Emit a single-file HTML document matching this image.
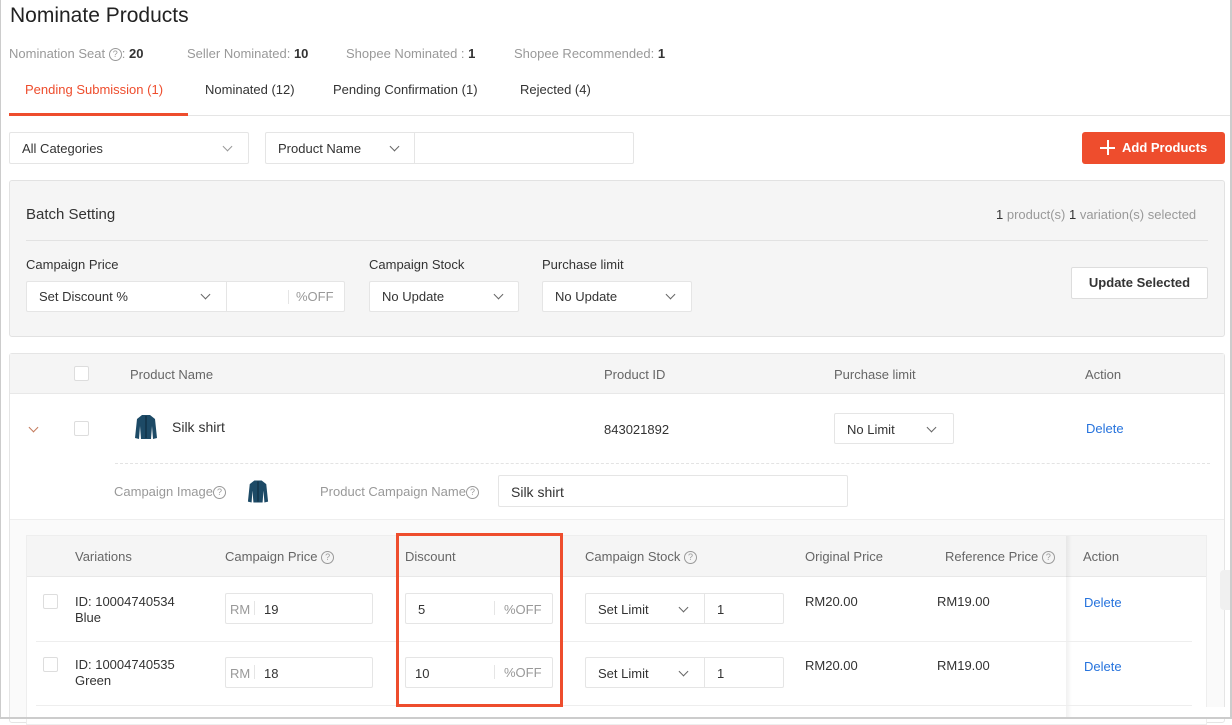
<!DOCTYPE html><html><head><meta charset="utf-8"><style>
*{box-sizing:border-box;margin:0;padding:0}
body{width:1232px;height:719px;overflow:hidden;background:#fff;font-family:"Liberation Sans",sans-serif;font-size:13px;color:#333;position:relative}
.a{position:absolute;white-space:nowrap}
.g{color:#999}
.box{position:absolute;border:1px solid #e5e5e5;border-radius:2px;background:#fff}
.chev{position:absolute;width:7px;height:7px;border-right:1.3px solid #666;border-bottom:1.3px solid #666;transform:rotate(45deg)}
.q{display:inline-block;width:13px;height:13px;border:1px solid #999;border-radius:50%;font-size:9px;line-height:11px;text-align:center;color:#999;vertical-align:1px}
.cb{position:absolute;width:15px;height:15px;border:1px solid #ddd;border-radius:2px;background:#fff}
.del{color:#2673dd}
</style></head><body>
<div class="a" style="left:0;top:0;width:1px;height:719px;background:#ccc"></div>
<div class="a" style="left:1230px;top:0;width:2px;height:719px;background:#ccc"></div>
<div class="a" style="left:10px;top:4px;font-size:21px;color:#222">Nominate Products</div>
<div class="a g" style="left:9px;top:46px">Nomination Seat <span class="q">?</span>: <b style="color:#333">20</b></div>
<div class="a g" style="left:187px;top:46px">Seller Nominated: <b style="color:#333">10</b></div>
<div class="a g" style="left:346px;top:46px">Shopee Nominated : <b style="color:#333">1</b></div>
<div class="a g" style="left:514px;top:46px">Shopee Recommended: <b style="color:#333">1</b></div>
<div class="a" style="left:25px;top:82px;color:#ee4d2d">Pending Submission (1)</div>
<div class="a" style="left:205px;top:82px">Nominated (12)</div>
<div class="a" style="left:333px;top:82px">Pending Confirmation (1)</div>
<div class="a" style="left:520px;top:82px">Rejected (4)</div>
<div class="a" style="left:9px;top:115px;width:1221px;height:1px;background:#e5e5e5"></div>
<div class="a" style="left:9px;top:113px;width:179px;height:3px;background:#ee4d2d"></div>

<div class="box" style="left:9px;top:132px;width:240px;height:32px"></div>
<div class="a" style="left:22px;top:141px">All Categories</div><div class="chev" style="left:224px;top:143px;border-color:#999"></div>
<div class="box" style="left:265px;top:132px;width:369px;height:32px"></div>
<div class="a" style="left:414px;top:132px;width:1px;height:32px;background:#e5e5e5"></div>
<div class="a" style="left:278px;top:141px">Product Name</div><div class="chev" style="left:391px;top:143px"></div>
<div class="a" style="left:1082px;top:132px;width:143px;height:32px;background:#ee4d2d;border-radius:3px;color:#fff;font-weight:bold;font-size:13px;line-height:31px;padding-left:40px">Add Products</div>
<div class="a" style="left:1100px;top:147px;width:15px;height:1.5px;background:#fff"></div>
<div class="a" style="left:1107px;top:140px;width:1.5px;height:15px;background:#fff"></div>

<div class="a" style="left:9px;top:180px;width:1216px;height:157px;background:#f5f5f5;border:1px solid #e2e2e2;border-radius:3px"></div>
<div class="a" style="left:26px;top:206px;font-size:15px">Batch Setting</div>
<div class="a g" style="left:996px;top:207px"><span style="color:#333">1</span> product(s) <span style="color:#333">1</span> variation(s) selected</div>
<div class="a" style="left:26px;top:240px;width:1182px;height:1px;background:#e2e2e2"></div>
<div class="a" style="left:26px;top:257px">Campaign Price</div>
<div class="a" style="left:369px;top:257px">Campaign Stock</div>
<div class="a" style="left:542px;top:257px">Purchase limit</div>
<div class="box" style="left:26px;top:281px;width:319px;height:31px"></div>
<div class="a" style="left:226px;top:281px;width:1px;height:31px;background:#e5e5e5"></div>
<div class="a" style="left:288px;top:290px;width:1px;height:14px;background:#e5e5e5"></div>
<div class="a" style="left:39px;top:289px">Set Discount %</div><div class="chev" style="left:202px;top:291px"></div>
<div class="a g" style="left:296px;top:289px">%OFF</div>
<div class="box" style="left:369px;top:281px;width:150px;height:31px"></div>
<div class="a" style="left:382px;top:289px">No Update</div><div class="chev" style="left:495px;top:291px"></div>
<div class="box" style="left:542px;top:281px;width:150px;height:31px"></div>
<div class="a" style="left:555px;top:289px">No Update</div><div class="chev" style="left:667px;top:291px"></div>
<div class="box" style="left:1071px;top:267px;width:137px;height:32px;border-color:#ddd;text-align:center;line-height:30px;font-weight:bold;color:#333">Update Selected</div>

<div class="a" style="left:9px;top:353px;width:1216px;height:370px;border:1px solid #e5e5e5;border-radius:3px"></div>
<div class="a" style="left:10px;top:354px;width:1214px;height:40px;background:#f5f5f5;border-bottom:1px solid #e8e8e8"></div>
<div class="cb" style="left:74px;top:366px"></div>
<div class="a g" style="left:130px;top:367px;color:#666">Product Name</div>
<div class="a" style="left:604px;top:367px;color:#666">Product ID</div>
<div class="a" style="left:834px;top:367px;color:#666">Purchase limit</div>
<div class="a" style="left:1085px;top:367px;color:#666">Action</div>
<div class="chev" style="left:30px;top:424px;border-color:#c37a5b"></div>
<div class="cb" style="left:74px;top:421px"></div>
<svg class="a" style="left:134px;top:414px" width="24" height="26" viewBox="0 0 24 26"><path d="M8 1 L16 1 L21 5 L23 24 L19 25 L18 12 L17 25 L7 25 L6 12 L5 25 L1 24 L3 5 Z" fill="#1d4a66"/><path d="M12 2 L12 24" stroke="#0c2638" stroke-width="1"/></svg>
<div class="a" style="left:172px;top:419px;font-size:14px">Silk shirt</div>
<div class="a" style="left:604px;top:422px">843021892</div>
<div class="box" style="left:834px;top:413px;width:120px;height:31px"></div>
<div class="a" style="left:847px;top:422px">No Limit</div><div class="chev" style="left:928px;top:424px"></div>
<div class="a del" style="left:1086px;top:421px">Delete</div>
<div class="a" style="left:115px;top:463px;width:1095px;border-top:1px dashed #e3e3e3"></div>
<div class="a g" style="left:114px;top:484px">Campaign Image<span class="q">?</span></div>
<svg class="a" style="left:247px;top:478px" width="22" height="27" viewBox="0 0 24 26"><path d="M8 1 L16 1 L21 5 L23 24 L19 25 L18 12 L17 25 L7 25 L6 12 L5 25 L1 24 L3 5 Z" fill="#1d4a66"/><path d="M12 2 L12 24" stroke="#0c2638" stroke-width="1"/></svg>
<div class="a g" style="left:320px;top:484px">Product Campaign Name<span class="q">?</span></div>
<div class="box" style="left:498px;top:475px;width:350px;height:32px"></div>
<div class="a" style="left:511px;top:484px;font-size:14px">Silk shirt</div>

<div class="a" style="left:10px;top:519px;width:1214px;height:200px;background:#fafafa;border-top:1px solid #eee"></div>
<div class="a" style="left:26px;top:535px;width:1181px;height:190px;background:#fff;border:1px solid #eee"></div>
<div class="a" style="left:27px;top:536px;width:1179px;height:41px;background:#f5f5f5;border-bottom:1px solid #e8e8e8"></div>
<div class="a" style="left:1066px;top:536px;width:6px;height:183px;background:linear-gradient(90deg,rgba(0,0,0,.06),rgba(0,0,0,0))"></div>
<div class="a" style="left:75px;top:549px;color:#666">Variations</div>
<div class="a" style="left:225px;top:549px;color:#666">Campaign Price <span class="q">?</span></div>
<div class="a" style="left:405px;top:549px;color:#666">Discount</div>
<div class="a" style="left:585px;top:549px;color:#666">Campaign Stock <span class="q">?</span></div>
<div class="a" style="left:805px;top:549px;color:#666">Original Price</div>
<div class="a" style="left:945px;top:549px;color:#666">Reference Price <span class="q">?</span></div>
<div class="a" style="left:1083px;top:549px;color:#666">Action</div>

<div class="a" style="left:36px;top:641px;width:1156px;height:1px;background:#eee"></div>
<div class="a" style="left:36px;top:705px;width:1156px;height:1px;background:#eee"></div>

<div class="cb" style="left:43px;top:594px"></div>
<div class="a" style="left:75px;top:594px;line-height:16px">ID: 10004740534<br>Blue</div>
<div class="box" style="left:225px;top:593px;width:148px;height:31px"></div>
<div class="a g" style="left:230px;top:602px">RM</div><div class="a" style="left:254px;top:601px;width:1px;height:14px;background:#e5e5e5"></div>
<div class="a" style="left:264px;top:602px">19</div>
<div class="box" style="left:405px;top:593px;width:148px;height:31px"></div>
<div class="a" style="left:418px;top:602px">5</div><div class="a" style="left:494px;top:601px;width:1px;height:14px;background:#e5e5e5"></div>
<div class="a g" style="left:504px;top:602px">%OFF</div>
<div class="box" style="left:585px;top:593px;width:199px;height:31px"></div>
<div class="a" style="left:704px;top:593px;width:1px;height:31px;background:#e5e5e5"></div>
<div class="a" style="left:598px;top:602px">Set Limit</div><div class="chev" style="left:680px;top:604px"></div>
<div class="a" style="left:717px;top:602px">1</div>
<div class="a" style="left:805px;top:594px">RM20.00</div>
<div class="a" style="left:937px;top:594px">RM19.00</div>
<div class="a del" style="left:1084px;top:595px">Delete</div>

<div class="cb" style="left:43px;top:657px"></div>
<div class="a" style="left:75px;top:657px;line-height:16px">ID: 10004740535<br>Green</div>
<div class="box" style="left:225px;top:657px;width:148px;height:31px"></div>
<div class="a g" style="left:230px;top:666px">RM</div><div class="a" style="left:254px;top:665px;width:1px;height:14px;background:#e5e5e5"></div>
<div class="a" style="left:264px;top:666px">18</div>
<div class="box" style="left:405px;top:657px;width:148px;height:31px"></div>
<div class="a" style="left:415px;top:666px">10</div><div class="a" style="left:494px;top:665px;width:1px;height:14px;background:#e5e5e5"></div>
<div class="a g" style="left:504px;top:665px">%OFF</div>
<div class="box" style="left:585px;top:657px;width:199px;height:31px"></div>
<div class="a" style="left:704px;top:657px;width:1px;height:31px;background:#e5e5e5"></div>
<div class="a" style="left:598px;top:666px">Set Limit</div><div class="chev" style="left:680px;top:668px"></div>
<div class="a" style="left:717px;top:666px">1</div>
<div class="a" style="left:805px;top:658px">RM20.00</div>
<div class="a" style="left:937px;top:658px">RM19.00</div>
<div class="a del" style="left:1084px;top:659px">Delete</div>

<div class="a" style="left:396px;top:533px;width:167px;height:174px;border:3px solid #ee4d2d"></div>
<div class="a" style="left:1220px;top:570px;width:10px;height:40px;background:#f0f0f0;border-radius:4px 0 0 4px"></div>
<div class="a" style="left:1133px;top:707px;width:97px;height:10px;background:#fff"></div>
<div class="a" style="left:0;top:717px;width:1232px;height:2px;background:#ccc"></div>
</body></html>
